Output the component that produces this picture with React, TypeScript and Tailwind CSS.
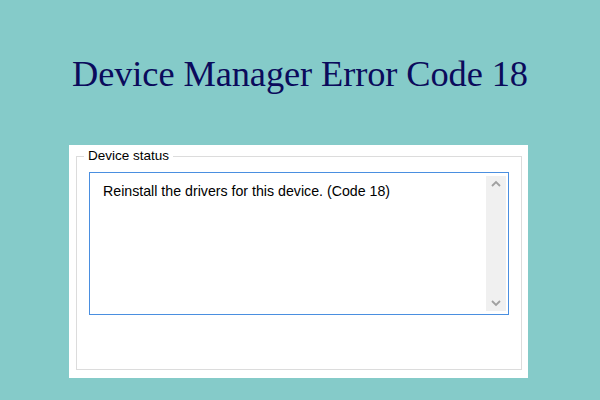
export default function App() {
  return (
    <div className="w-[600px] h-[400px] bg-[#85cbc9] flex flex-col items-center overflow-hidden">
      <h1
        className="mt-[53px] text-[36.4px] leading-[42px] text-[#0b0b5c] tracking-[-0.1px]"
        style={{ fontFamily: '"Liberation Serif", serif' }}
      >
        Device Manager Error Code 18
      </h1>
      <div
        className="mt-[50px] ml-[-3px] w-[459px] h-[233px] bg-white pt-[11px] pl-[7px] pr-[6px] pb-[8px]"
        style={{ fontFamily: '"Liberation Sans", Arial, sans-serif' }}
      >
        <div className="relative h-full border border-[#dcdcdc] pt-[15px] pl-[12px] pr-[12px]">
          <span className="absolute left-[7px] top-[-10px] bg-white px-[4px] text-[13.5px] leading-[18px] text-black">
            Device status
          </span>
          <div className="flex h-[143px] border border-[#4a8fe0] bg-white">
            <div className="flex-1 pl-[13px] pt-[9px] text-[14.2px] leading-[18px] text-black">
              Reinstall the drivers for this device. (Code 18)
            </div>
            <div className="my-[3px] mr-[2px] w-[20px] bg-[#f0f0f0] flex flex-col justify-between items-center py-[4px]">
              <svg width="10" height="8" viewBox="0 0 10 8">
                <path d="M1 6 L5 2 L9 6" fill="none" stroke="#a0a0a0" strokeWidth="1.8" />
              </svg>
              <svg width="10" height="8" viewBox="0 0 10 8">
                <path d="M1 2 L5 6 L9 2" fill="none" stroke="#a0a0a0" strokeWidth="1.8" />
              </svg>
            </div>
          </div>
        </div>
      </div>
    </div>
  );
}
